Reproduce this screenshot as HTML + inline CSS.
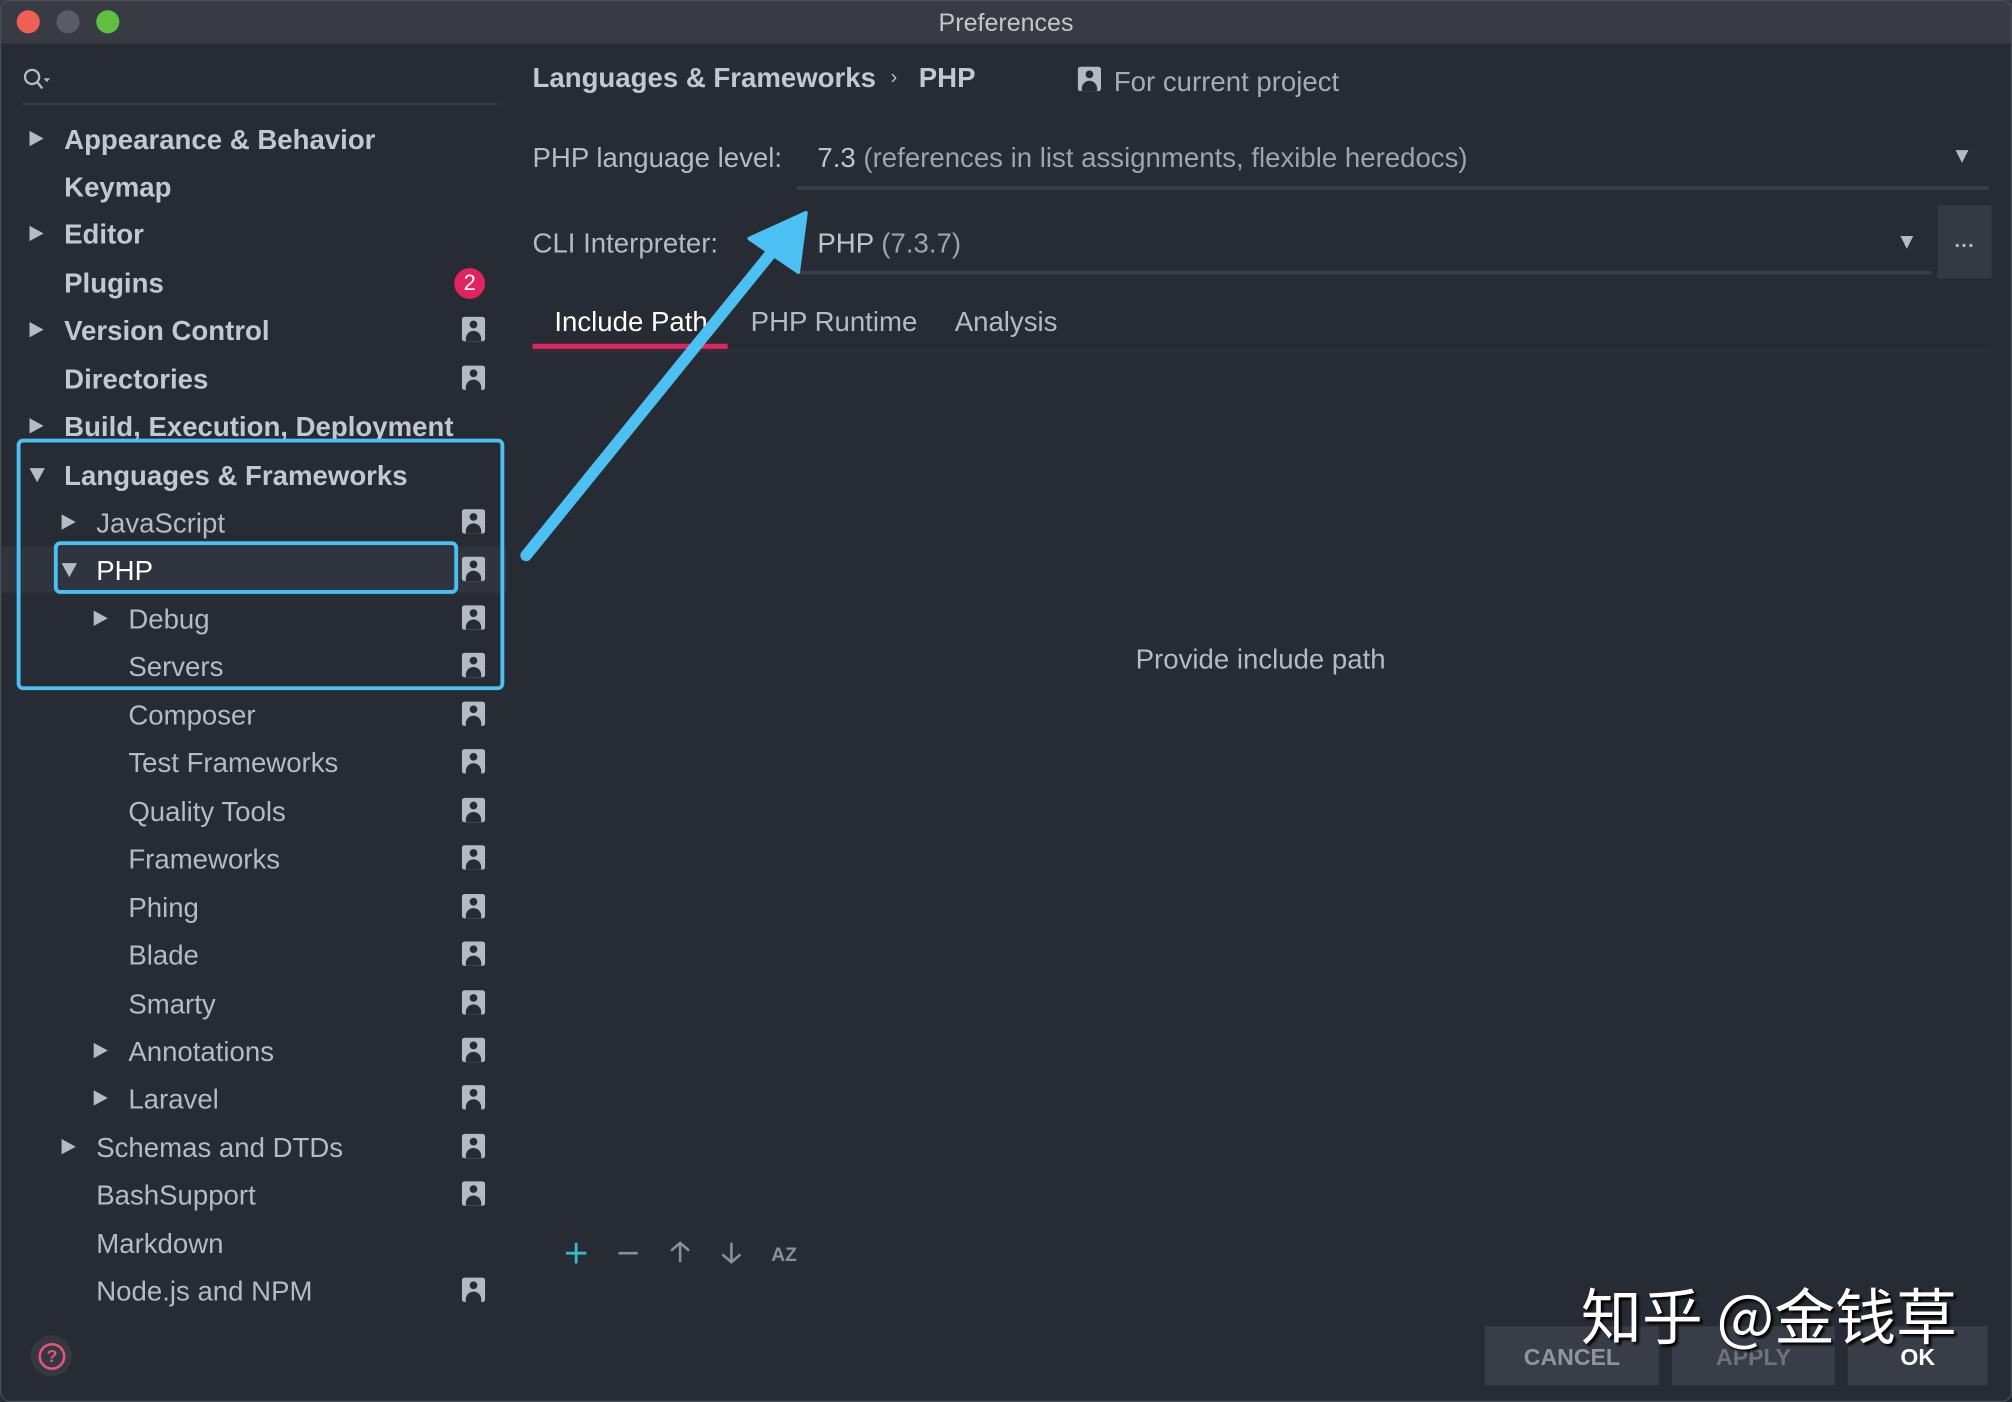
<!DOCTYPE html>
<html><head><meta charset="utf-8">
<style>
html,body{margin:0;padding:0;background:#272b33;overflow:hidden;width:2012px;height:1402px}
#w{position:absolute;left:0;top:0;width:1568px;height:1093px;transform:scale(1.2832,1.2827);transform-origin:0 0;background:#272b33;font-family:"Liberation Sans","Noto Sans CJK SC",sans-serif;color:#b6bac2}
.a{position:absolute;white-space:nowrap}
.t{font-size:21.5px;line-height:24px;transform:translateY(-11px)}
.b{font-weight:bold;color:#c3c7cf}
.tri{position:absolute;width:0;height:0;border-top:6px solid transparent;border-bottom:6px solid transparent;border-left:11px solid #b6bac2;transform:translateY(-6px)}
.trd{position:absolute;width:0;height:0;border-left:6px solid transparent;border-right:6px solid transparent;border-top:11px solid #b6bac2;transform:translateY(-5px)}
.ic{position:absolute;width:18px;height:19px;border-radius:2px;background:#b4bac4;transform:translate(-9px,-10px);overflow:hidden}
.ic:before{content:"";position:absolute;left:6px;top:3px;width:6px;height:6px;border-radius:50%;background:#272b33}
.ic:after{content:"";position:absolute;left:3px;top:11px;width:12px;height:8px;border-radius:6px 6px 0 0;background:#272b33}
.btn{position:absolute;top:1034px;height:46px;background:#393d48;font-weight:bold;font-size:18px;line-height:48px;text-align:center;color:#8f949d}
</style></head><body><div id="w">
<div class="a" style="left:0;top:0;width:1568px;height:34px;background:#383b44"></div>
<div class="a" style="left:0;top:1px;width:1568px;text-align:center;font-size:19.5px;line-height:34px;color:#c4c6ca">Preferences</div>
<div class="a" style="left:13px;top:8px;width:18px;height:18px;border-radius:50%;background:#ee5f56"></div>
<div class="a" style="left:44px;top:8px;width:18px;height:18px;border-radius:50%;background:#5a5d66"></div>
<div class="a" style="left:75px;top:8px;width:18px;height:18px;border-radius:50%;background:#5dc041"></div>
<svg class="a" style="left:17px;top:52px" width="24" height="20"><circle cx="8" cy="8" r="5.5" fill="none" stroke="#b6bac2" stroke-width="1.8"/><line x1="12" y1="12" x2="16" y2="17" stroke="#b6bac2" stroke-width="1.8"/><path d="M17 9 L22 9 L19.5 12z" fill="#b6bac2"/></svg>
<div class="a" style="left:18px;top:80px;width:370px;height:2px;background:#363a44"></div>
<div class="a" style="left:0;top:426px;width:395px;height:36px;background:#30343e"></div>

<div class="tri" style="left:23px;top:108px"></div><div class="a t b" style="left:50px;top:108px">Appearance &amp; Behavior</div>
<div class="a t b" style="left:50px;top:145px">Keymap</div>
<div class="tri" style="left:23px;top:182px"></div><div class="a t b" style="left:50px;top:182px">Editor</div>
<div class="a t b" style="left:50px;top:220px">Plugins</div>
<div class="a" style="left:354px;top:209px;width:24px;height:24px;border-radius:50%;background:#e0245e;color:#fff;font-size:17px;line-height:24px;text-align:center">2</div>
<div class="tri" style="left:23px;top:257px"></div><div class="a t b" style="left:50px;top:257px">Version Control</div><div class="ic" style="left:369px;top:257px"></div>
<div class="a t b" style="left:50px;top:295px">Directories</div><div class="ic" style="left:369px;top:295px"></div>
<div class="tri" style="left:23px;top:332px"></div><div class="a t b" style="left:50px;top:332px">Build, Execution, Deployment</div>
<div class="trd" style="left:23px;top:370px"></div><div class="a t b" style="left:50px;top:370px">Languages &amp; Frameworks</div>
<div class="tri" style="left:48px;top:407px"></div><div class="a t" style="left:75px;top:407px">JavaScript</div><div class="ic" style="left:369px;top:407px"></div>
<div class="trd" style="left:48px;top:444px"></div><div class="a t" style="left:75px;top:444px;color:#fff">PHP</div><div class="ic" style="left:369px;top:444px"></div>
<div class="tri" style="left:73px;top:482px"></div><div class="a t" style="left:100px;top:482px">Debug</div><div class="ic" style="left:369px;top:482px"></div>
<div class="a t" style="left:100px;top:519px">Servers</div><div class="ic" style="left:369px;top:519px"></div>
<div class="a t" style="left:100px;top:557px">Composer</div><div class="ic" style="left:369px;top:557px"></div>
<div class="a t" style="left:100px;top:594px">Test Frameworks</div><div class="ic" style="left:369px;top:594px"></div>
<div class="a t" style="left:100px;top:632px">Quality Tools</div><div class="ic" style="left:369px;top:632px"></div>
<div class="a t" style="left:100px;top:669px">Frameworks</div><div class="ic" style="left:369px;top:669px"></div>
<div class="a t" style="left:100px;top:707px">Phing</div><div class="ic" style="left:369px;top:707px"></div>
<div class="a t" style="left:100px;top:744px">Blade</div><div class="ic" style="left:369px;top:744px"></div>
<div class="a t" style="left:100px;top:782px">Smarty</div><div class="ic" style="left:369px;top:782px"></div>
<div class="tri" style="left:73px;top:819px"></div><div class="a t" style="left:100px;top:819px">Annotations</div><div class="ic" style="left:369px;top:819px"></div>
<div class="tri" style="left:73px;top:856px"></div><div class="a t" style="left:100px;top:856px">Laravel</div><div class="ic" style="left:369px;top:856px"></div>
<div class="tri" style="left:48px;top:894px"></div><div class="a t" style="left:75px;top:894px">Schemas and DTDs</div><div class="ic" style="left:369px;top:894px"></div>
<div class="a t" style="left:75px;top:931px">BashSupport</div><div class="ic" style="left:369px;top:931px"></div>
<div class="a t" style="left:75px;top:969px">Markdown</div>
<div class="a t" style="left:75px;top:1006px">Node.js and NPM</div><div class="ic" style="left:369px;top:1006px"></div>

<div class="a" style="left:13px;top:342px;width:374px;height:190px;border:3px solid #4cc0f3;border-radius:5px"></div>
<div class="a" style="left:42px;top:422px;width:309px;height:35px;border:3px solid #4cc0f3;border-radius:5px"></div>

<div class="a" style="left:24px;top:1041px;width:32px;height:32px;border-radius:50%;background:#343843"></div>
<div class="a" style="left:30px;top:1047px;width:17px;height:17px;border-radius:50%;border:2px solid #e8557a;color:#e8557a;font-size:14px;line-height:17px;text-align:center;font-weight:bold">?</div>

<div class="a t b" style="left:415px;top:60px">Languages &amp; Frameworks</div>
<div class="a t" style="left:694px;top:60px;font-size:16px">›</div>
<div class="a t b" style="left:716px;top:60px">PHP</div>
<div class="ic" style="left:849px;top:62px"></div>
<div class="a t" style="left:868px;top:63px;color:#a7abb3">For current project</div>

<div class="a t" style="left:415px;top:122px">PHP language level:</div>
<div class="a t" style="left:637px;top:122px;color:#c0c3c9">7.3 <span style="color:#9fa3ab">(references in list assignments, flexible heredocs)</span></div>
<div class="trd" style="left:1524px;top:122px;border-left-width:5.5px;border-right-width:5.5px;border-top-width:10px"></div>
<div class="a" style="left:621px;top:145px;width:929px;height:3px;background:#393d47"></div>

<div class="a t" style="left:415px;top:189px">CLI Interpreter:</div>
<div class="a t" style="left:637px;top:189px;color:#c0c3c9">PHP <span style="color:#9fa3ab">(7.3.7)</span></div>
<div class="trd" style="left:1481px;top:189px;border-left-width:5.5px;border-right-width:5.5px;border-top-width:10px"></div>
<div class="a" style="left:621px;top:211px;width:884px;height:3px;background:#393d47"></div>
<div class="a" style="left:1510px;top:160px;width:42px;height:57px;background:#353943;color:#b6bac2;text-align:center;font-size:16px;line-height:66px;font-weight:bold">···</div>

<div class="a t" style="left:432px;top:250px;color:#fff">Include Path</div>
<div class="a t" style="left:585px;top:250px">PHP Runtime</div>
<div class="a t" style="left:744px;top:250px">Analysis</div>
<div class="a" style="left:415px;top:273px;width:1137px;height:1px;background:#31353e"></div>
<div class="a" style="left:415px;top:268px;width:152px;height:4px;background:#e0245e"></div>

<div class="a t" style="left:885px;top:513px">Provide include path</div>

<svg class="a" style="left:430px;top:960px" width="200" height="34">
<path d="M19 9v16M11 17h16" stroke="#3ab8c8" stroke-width="2.2"/>
<path d="M52 17h15" stroke="#8b9098" stroke-width="2"/>
<path d="M100 24V9M93 15l7-6 7 6" stroke="#8b9098" stroke-width="2" fill="none"/>
<path d="M140 9v15M133 18l7 6 7-6" stroke="#8b9098" stroke-width="2" fill="none"/>
<text x="171" y="23" font-family="Liberation Sans" font-weight="bold" font-size="15" fill="#8b9098">AZ</text>
</svg>

<div class="btn" style="left:1157px;width:136px">CANCEL</div>
<div class="btn" style="left:1303px;width:127px;color:#6d727b">APPLY</div>
<div class="btn" style="left:1440px;width:109px;color:#fff">OK</div>

<div class="a" style="left:1232px;top:995px;font-size:47.5px;line-height:58px;color:#fff;text-shadow:2px 2px 2px #000;font-family:'Noto Sans CJK SC',sans-serif">知乎 @金钱草</div>

<svg class="a" style="left:0;top:0" width="700" height="500">
<path d="M410 433 L602 196" stroke="#4cc0f3" stroke-width="9" stroke-linecap="round"/>
<path d="M628 166 L584 186 L622 212 Z" fill="#4cc0f3" stroke="#4cc0f3" stroke-width="3" stroke-linejoin="round"/>
</svg>
<div class="a" style="left:0;top:0;width:1566px;height:1091px;border:1px solid #4a4d55;border-radius:8px"></div>
</div></body></html>
